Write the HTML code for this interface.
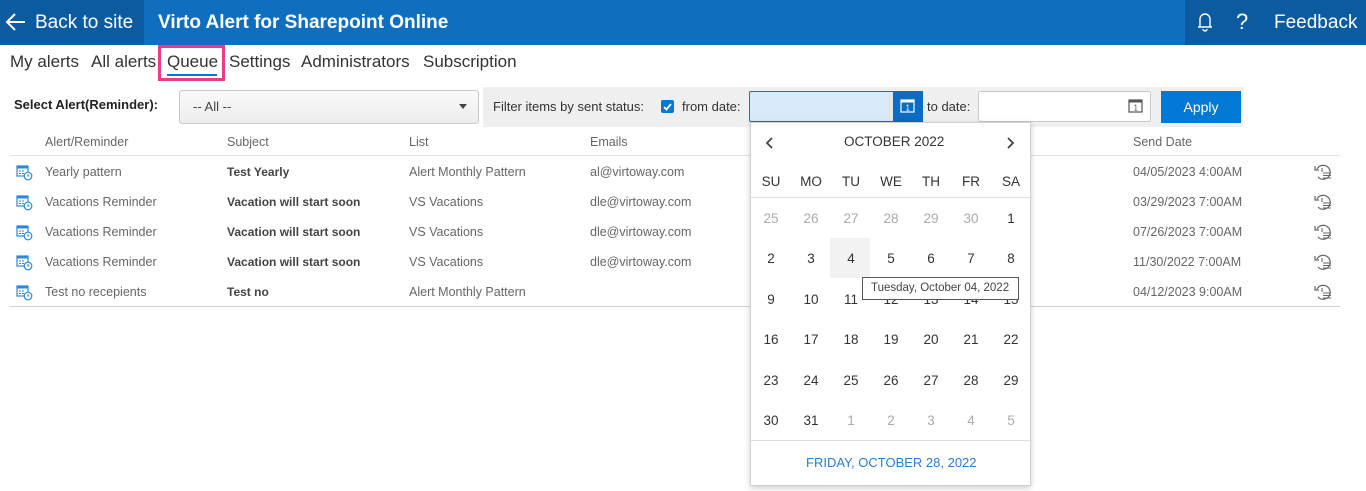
<!DOCTYPE html><html><head><style>
*{box-sizing:border-box;margin:0;padding:0}
body{width:1366px;height:491px;overflow:hidden;background:#fff;font-family:"Liberation Sans",sans-serif;color:#333;position:relative}
.a{position:absolute;white-space:nowrap}
.hd{position:absolute;left:0;top:0;width:1366px;height:45px;background:#106ebe}
.c{font-size:12.5px;color:#666}
.b{font-size:12px;color:#444;font-weight:bold}
.d{position:absolute;width:40px;text-align:center;font-size:13.5px;color:#333}
.g{color:#aaa}
</style></head><body>
<div class="hd"></div>
<div class="a" style="left:0;top:0;width:144px;height:45px;background:#0b5ba1"></div>
<div class="a" style="left:1185px;top:0;width:181px;height:45px;background:#0b5ba1"></div>
<svg class="a" style="left:5px;top:12px" width="22" height="20"><path d="M2 10H20M10 2L2 10L10 18" stroke="#fff" stroke-width="2" fill="none"/></svg>
<div class="a" style="left:35px;top:12px;font-size:19px;color:#fff">Back to site</div>
<div class="a" style="left:158px;top:12px;font-size:19px;color:#fff;font-weight:bold">Virto Alert for Sharepoint Online</div>
<svg class="a" style="left:1196px;top:11px" width="18" height="22"><path d="M4 16V8a5 5 0 0 1 10 0v8zM2 16h14M7 18a2 2 0 0 0 4 0" stroke="#fff" stroke-width="1.4" fill="none"/></svg>
<div class="a" style="left:1236px;top:9px;font-size:22px;color:#fff">?</div>
<div class="a" style="left:1274px;top:12px;font-size:19px;color:#fff">Feedback</div>

<div class="a" style="left:10px;top:52px;font-size:17px;color:#333">My alerts</div>
<div class="a" style="left:91px;top:52px;font-size:17px;color:#333">All alerts</div>
<div class="a" style="left:158px;top:45px;width:67px;height:36px;border:3px solid #ec3b8b"></div>
<div class="a" style="left:167px;top:52px;font-size:17px;color:#333">Queue</div>
<div class="a" style="left:167px;top:74px;width:50px;height:2px;background:#0078d4"></div>
<div class="a" style="left:229px;top:52px;font-size:17px;color:#333">Settings</div>
<div class="a" style="left:301px;top:52px;font-size:17px;color:#333">Administrators</div>
<div class="a" style="left:423px;top:52px;font-size:17px;color:#333">Subscription</div>

<div class="a" style="left:14px;top:97px;font-size:13px;font-weight:bold;color:#222">Select Alert(Reminder):</div>
<div class="a" style="left:179px;top:90px;width:300px;height:34px;border:1px solid #c8c8c8;border-radius:3px;background:linear-gradient(#fafafa,#ececec)"></div>
<div class="a" style="left:193px;top:99px;font-size:13px;color:#444">-- All --</div>
<div class="a" style="left:459px;top:104px;border:4px solid transparent;border-top:5px solid #444"></div>
<div class="a" style="left:483px;top:87px;width:760px;height:40px;background:#efefef"></div>
<div class="a" style="left:493px;top:99px;font-size:13px;color:#333">Filter items by sent status:</div>
<div class="a" style="left:661px;top:100px;width:13px;height:13px;background:#0078d4;border-radius:2px"></div>
<svg class="a" style="left:662px;top:101px" width="11" height="11"><path d="M2 6l2.5 2.5L9 3" stroke="#fff" stroke-width="1.8" fill="none"/></svg>
<div class="a" style="left:682px;top:99px;font-size:13px;color:#333">from date:</div>
<div class="a" style="left:749px;top:91px;width:174px;height:31px;background:#d9e9f6;border:1px solid #0078d4;border-radius:2px"></div>
<div class="a" style="left:893px;top:91px;width:30px;height:31px;background:#0a6cc2"></div>
<svg class="a" style="left:900px;top:98px" width="16" height="16"><rect x="1" y="2" width="13" height="12" fill="none" stroke="#fff" stroke-width="1.2"/><rect x="1" y="2" width="13" height="2.5" fill="#fff"/><text x="5.5" y="12.5" font-size="8" fill="#fff" font-family="Liberation Sans">1</text></svg>
<div class="a" style="left:927px;top:99px;font-size:13px;color:#333">to date:</div>
<div class="a" style="left:978px;top:91px;width:173px;height:31px;background:#fff;border:1px solid #c8c8c8;border-radius:3px"></div>
<svg class="a" style="left:1128px;top:98px" width="16" height="16"><rect x="1" y="2" width="13" height="12" fill="none" stroke="#555" stroke-width="1.2"/><rect x="1" y="2" width="13" height="2.5" fill="#555"/><text x="5.5" y="12.5" font-size="8" fill="#555" font-family="Liberation Sans">1</text></svg>
<div class="a" style="left:1161px;top:91px;width:80px;height:32px;background:#0078d4;color:#fff;font-size:14px;text-align:center;line-height:32px">Apply</div>

<div class="a c" style="left:45px;top:135px">Alert/Reminder</div>
<div class="a c" style="left:227px;top:135px">Subject</div>
<div class="a c" style="left:409px;top:135px">List</div>
<div class="a c" style="left:590px;top:135px">Emails</div>
<div class="a c" style="left:1133px;top:135px">Send Date</div>
<div class="a" style="left:10px;top:155px;width:1330px;height:1px;background:#e2e2e2"></div>
<div class="a" style="left:10px;top:306px;width:1330px;height:1px;background:#d0d0d0"></div>

<div id="rows"></div>
<script>
var R=[["Yearly pattern","Test Yearly","Alert Monthly Pattern","al@virtoway.com","04/05/2023 4:00AM"],
["Vacations Reminder","Vacation will start soon","VS Vacations","dle@virtoway.com","03/29/2023 7:00AM"],
["Vacations Reminder","Vacation will start soon","VS Vacations","dle@virtoway.com","07/26/2023 7:00AM"],
["Vacations Reminder","Vacation will start soon","VS Vacations","dle@virtoway.com","11/30/2022 7:00AM"],
["Test no recepients","Test no","Alert Monthly Pattern","","04/12/2023 9:00AM"]];
var h="";R.forEach(function(r,i){var y=165+i*30;
h+='<svg class="a" style="left:16px;top:'+(y-1)+'px" width="17" height="17"><rect x="1" y="2" width="11" height="10" fill="none" stroke="#2b88d8" stroke-width="1.2"/><rect x="1" y="2" width="11" height="2.5" fill="#2b88d8"/><path d="M3 7h2M6 7h2M3 9.5h2M6 9.5h2" stroke="#2b88d8"/><circle cx="12" cy="12" r="3.8" fill="#fff" stroke="#2b88d8" stroke-width="1.2"/><path d="M12 10v2h1.5" stroke="#2b88d8" fill="none"/></svg>';
h+='<div class="a c" style="left:45px;top:'+y+'px">'+r[0]+'</div><div class="a b" style="left:227px;top:'+y+'px">'+r[1]+'</div><div class="a c" style="left:409px;top:'+y+'px">'+r[2]+'</div><div class="a c" style="left:590px;top:'+y+'px">'+r[3]+'</div><div class="a c" style="left:1133px;top:'+y+'px">'+r[4]+'</div>';
h+='<svg class="a" style="left:1313px;top:'+(y-2)+'px" width="20" height="18"><path d="M4 6a7 7 0 1 1 1 8" stroke="#666" stroke-width="1.2" fill="none"/><path d="M2 3v4h4" stroke="#666" stroke-width="1.2" fill="none"/><path d="M9 5v4M10 10h8M10 12.5h8M10 15h8" stroke="#666" stroke-width="1.1"/></svg>';});
document.getElementById("rows").innerHTML=h;
</script>

<div class="a" style="left:750px;top:122px;width:281px;height:364px;background:#fff;border:1px solid #d0d0d0;box-shadow:0 2px 6px rgba(0,0,0,.2)"></div>
<svg class="a" style="left:764px;top:136px" width="10" height="14"><path d="M8 2L3 7l5 5" stroke="#444" stroke-width="1.8" fill="none"/></svg>
<svg class="a" style="left:1006px;top:136px" width="10" height="14"><path d="M2 2l5 5-5 5" stroke="#444" stroke-width="1.8" fill="none"/></svg>
<div class="a" style="left:844px;top:134px;font-size:13.5px;color:#333">OCTOBER 2022</div>
<div class="a" style="left:751px;top:197px;width:279px;height:1px;background:#ddd"></div>
<div class="a" style="left:751px;top:440px;width:279px;height:1px;background:#ddd"></div>
<div class="a" style="left:830px;top:238px;width:40px;height:40px;background:#f2f2f2"></div>
<div id="cal"></div>
<div class="a" style="left:806px;top:455px;font-size:13px;color:#2b7cd3">FRIDAY, OCTOBER 28, 2022</div>
<div class="a" style="left:862px;top:277px;width:157px;height:23px;background:#fff;border:1px solid #555;font-size:11.5px;color:#444;line-height:21px;padding-left:8px">Tuesday, October 04, 2022</div>
<script>
var W=["SU","MO","TU","WE","TH","FR","SA"],c="";
W.forEach(function(w,i){c+='<div class="d" style="left:'+(751+i*40)+'px;top:174px">'+w+'</div>';});
var days=[25,26,27,28,29,30,1];for(var i=2;i<=31;i++)days.push(i);days.push(1,2,3,4,5);
var ys=[211,251,292,332,373,413];
days.forEach(function(d,k){var r=Math.floor(k/7),col=k%7;var g=(r==0&&d>20)||(r==5&&d<10);
c+='<div class="d'+(g?' g':'')+'" style="left:'+(751+col*40)+'px;top:'+ys[r]+'px">'+d+'</div>';});
document.getElementById("cal").innerHTML=c;
</script>
</body></html>
